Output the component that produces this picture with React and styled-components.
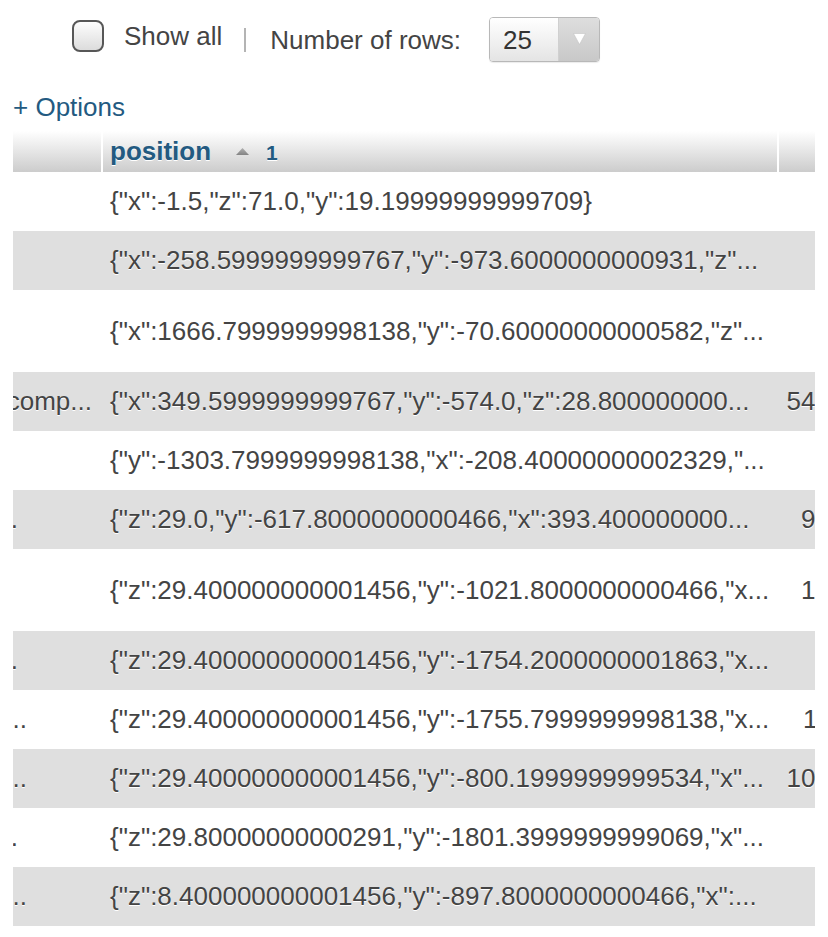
import React from 'react'
import styled, { createGlobalStyle } from 'styled-components'

const rows = [
  { pos: '{"x":-1.5,"z":71.0,"y":19.19999999999709}' },
  { pos: '{"x":-258.5999999999767,"y":-973.6000000000931,"z"...' },
  { pos: '{"x":1666.7999999998138,"y":-70.60000000000582,"z"...', tall: true },
  { pos: '{"x":349.5999999999767,"y":-574.0,"z":28.800000000...', lead: 'comp...', tail: 9, count: '548' },
  { pos: '{"y":-1303.7999999998138,"x":-208.40000000002329,"...' },
  { pos: '{"z":29.0,"y":-617.8000000000466,"x":393.400000000...', lead: '...', tail: 83, count: '97' },
  { pos: '{"z":29.400000000001456,"y":-1021.8000000000466,"x...', tall: true, count: '14' },
  { pos: '{"z":29.400000000001456,"y":-1754.2000000001863,"x...', lead: '...', tail: 83 },
  { pos: '{"z":29.400000000001456,"y":-1755.7999999998138,"x...', lead: '...', tail: 74, count: '11' },
  { pos: '{"z":29.400000000001456,"y":-800.1999999999534,"x"...', lead: '...', tail: 74, count: '106' },
  { pos: '{"z":29.80000000000291,"y":-1801.3999999999069,"x"...', lead: '...', tail: 83 },
  { pos: '{"z":8.400000000001456,"y":-897.8000000000466,"x":...', lead: '...', tail: 74 },
]

export default function App() {
  return (
    <>
      <GlobalStyle />
      <TopBar>
        <Checkbox />
        <ShowAll>Show all</ShowAll>
        <Divider />
        <RowsLabel>Number of rows:</RowsLabel>
        <Select>
          <SelectValue>25</SelectValue>
          <SelectArrow>
            <svg width="13" height="12" viewBox="0 0 13 12">
              <polygon points="0.5,0.5 12.5,0.5 6.5,11.5" fill="#fff" stroke="#c4c4c4" strokeWidth="0.6" />
            </svg>
          </SelectArrow>
        </Select>
      </TopBar>
      <Options>+ Options</Options>
      <Frame>
        <Table>
          <colgroup>
            <col style={{ width: 200 }} />
            <col style={{ width: 676 }} />
            <col style={{ width: 58 }} />
          </colgroup>
          <thead>
            <tr>
              <Th />
              <Th>
                <HeadLink>position</HeadLink>
                <SortIcon width="13" height="7" viewBox="0 0 13 7">
                  <defs>
                    <linearGradient id="sortg" x1="0" y1="0" x2="0" y2="1">
                      <stop offset="0" stopColor="#b0b0b0" />
                      <stop offset="1" stopColor="#838383" />
                    </linearGradient>
                  </defs>
                  <polygon points="6.5,0 13,7 0,7" fill="url(#sortg)" />
                </SortIcon>
                <SortOrder>1</SortOrder>
              </Th>
              <Th />
            </tr>
          </thead>
          <tbody>
            {rows.map((r, i) => (
              <Row key={i} $even={i % 2 === 1} $tall={r.tall}>
                <LeadCell $tail={r.tail || 0}>{r.lead}</LeadCell>
                <Cell>{r.pos}</Cell>
                <CountCell>{r.count}</CountCell>
              </Row>
            ))}
          </tbody>
        </Table>
      </Frame>
    </>
  )
}

const GlobalStyle = createGlobalStyle`
  body {
    margin: 0;
    background: #fff;
    font-family: "Liberation Sans", Arial, sans-serif;
    color: #444;
    overflow: hidden;
  }
`

const TopBar = styled.div`
  display: flex;
  align-items: center;
  padding: 17px 0 0 72px;
  height: 44px;
  font-size: 26px;
  color: #444;
`

const Checkbox = styled.span`
  box-sizing: border-box;
  width: 32px;
  height: 32px;
  margin-top: -6px;
  border: 2px solid #575757;
  border-radius: 8px;
  background: linear-gradient(#fdfdfd, #dcdcdc);
`

const ShowAll = styled.span`
  margin-left: 20px;
  margin-top: -5px;
`

const Divider = styled.span`
  width: 2px;
  height: 24px;
  margin: 2px 24px 0 22px;
  background: #b4b4b4;
`

const RowsLabel = styled.span`
  margin-top: 2px;
`

const Select = styled.div`
  box-sizing: border-box;
  display: flex;
  width: 111px;
  height: 45px;
  margin-left: 28px;
  border: 1px solid #b8b8b8;
  border-radius: 4px;
  overflow: hidden;
  box-shadow: 0 1px 1px rgba(0, 0, 0, 0.08);
`

const SelectValue = styled.span`
  flex: 1;
  display: flex;
  align-items: center;
  padding: 2px 0 0 13px;
  background: linear-gradient(#ffffff, #e4e4e4);
  color: #333;
`

const SelectArrow = styled.span`
  width: 40px;
  display: flex;
  align-items: center;
  justify-content: center;
  border-left: 1px solid #d0d0d0;
  background: linear-gradient(#dedede, #c8c8c8);
`

const Options = styled.div`
  margin: 31px 0 0 13px;
  height: 39px;
  font-size: 26px;
  line-height: 30px;
  color: #235a81;
`

const Frame = styled.div`
  margin-left: 13px;
  width: 802px;
  overflow: hidden;
`

const Table = styled.table`
  table-layout: fixed;
  width: 934px;
  margin-left: -112px;
  border-collapse: separate;
  border-spacing: 0;
  font-size: 26px;
  text-shadow: 0 1px 0 #fff;
`

const Th = styled.th`
  height: 41px;
  padding: 0 0 0 9px;
  text-align: left;
  white-space: nowrap;
  background: linear-gradient(#ffffff, #cccccc);

  & + & {
    box-shadow: inset 2px 0 0 #fff;
  }
`

const HeadLink = styled.span`
  font-weight: bold;
  color: #235a81;
`

const SortIcon = styled.svg`
  margin: 0 0 3px 25px;
  vertical-align: middle;
`

const SortOrder = styled.span`
  margin-left: 17px;
  font-size: 21px;
  font-weight: bold;
  color: #235a81;
`

const Row = styled.tr`
  height: ${p => (p.$tall ? 82 : 59)}px;
  background: ${p => (p.$even ? '#dfdfdf' : '#fff')};
`

const Cell = styled.td`
  padding: 0 0 0 9px;
  white-space: nowrap;
  overflow: hidden;
  color: #444;
`

const LeadCell = styled(Cell)`
  padding: 0 ${p => p.$tail}px 0 0;
  text-align: right;
`

const CountCell = styled(Cell)`
  padding: 0 5px 0 0;
  text-align: right;
`
